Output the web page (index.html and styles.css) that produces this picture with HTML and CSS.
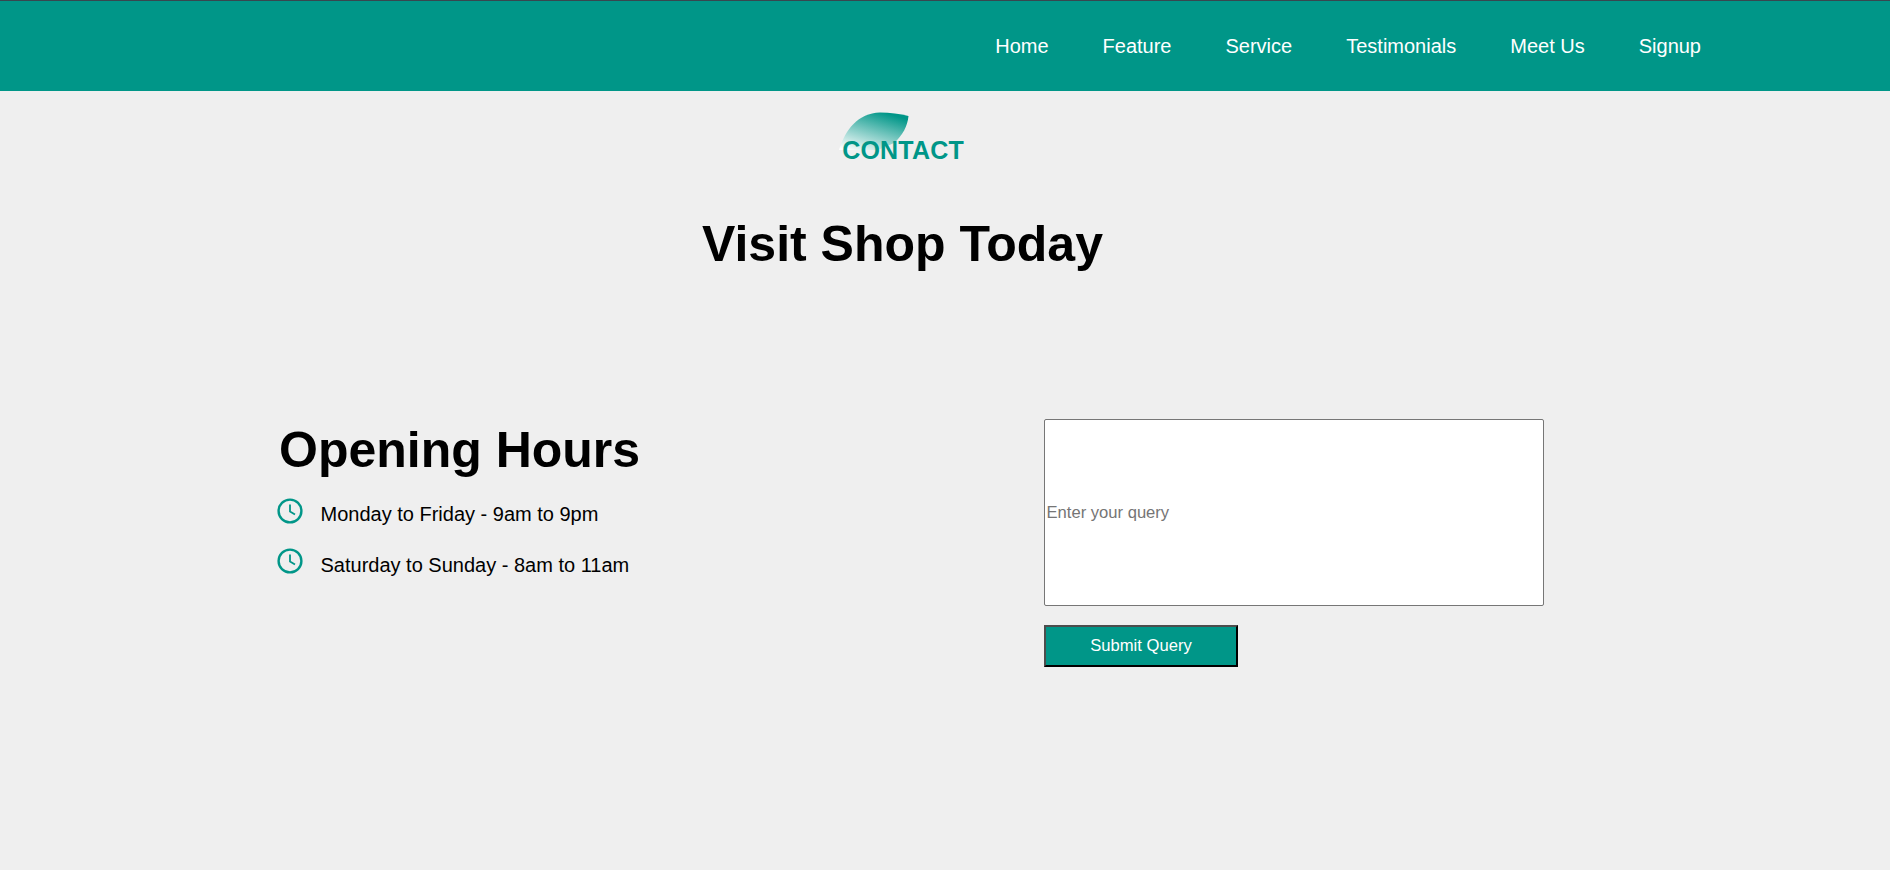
FILE: index.html
```html
<!DOCTYPE html>
<html lang="en">
<head>
<meta charset="utf-8">
<title>Contact</title>
<link rel="stylesheet" href="styles.css">
</head>
<body>
<header class="topbar">
  <nav class="nav">
    <a href="#">Home</a>
    <a href="#">Feature</a>
    <a href="#">Service</a>
    <a href="#">Testimonials</a>
    <a href="#">Meet Us</a>
    <a href="#">Signup</a>
  </nav>
</header>
<section class="title-block">
  <div class="eyebrow">
    <svg class="leaf" width="72" height="40" viewBox="0 0 72 40" aria-hidden="true">
      <defs>
        <linearGradient id="leafgrad" x1="0.66" y1="0" x2="0.1" y2="1">
          <stop offset="0" stop-color="#009688"/>
          <stop offset="1" stop-color="#fff"/>
        </linearGradient>
      </defs>
      <path d="M1 38 C7 18 20 1 42 0.5 C52 0.5 62 2 70.500 4 C69.500 14 65 23 56 31 L40 38 Z" fill="url(#leafgrad)"/>
    </svg>
    <span class="eyebrow-text">CONTACT</span>
  </div>
  <h1>Visit Shop Today</h1>
</section>
<main class="columns">
  <div class="hours">
    <h2>Opening Hours</h2>
    <ul>
      <li>
        <svg class="clock" width="26" height="26" viewBox="0 0 26 26" aria-hidden="true"><circle cx="13" cy="13" r="11.4"/><path class="hand" d="M13 6.5V13.5L18 16.5"/></svg>
        <span>Monday to Friday - 9am to 9pm</span>
      </li>
      <li>
        <svg class="clock" width="26" height="26" viewBox="0 0 26 26" aria-hidden="true"><circle cx="13" cy="13" r="11.4"/><path class="hand" d="M13 6.5V13.5L18 16.5"/></svg>
        <span>Saturday to Sunday - 8am to 11am</span>
      </li>
    </ul>
  </div>
  <form class="query">
    <input class="query-input" type="text" placeholder="Enter your query">
    <button class="submit" type="button">Submit Query</button>
  </form>
</main>
</body>
</html>
```
FILE: styles.css
```css
* { box-sizing: border-box; }
html, body { margin: 0; height: 100%; overflow: hidden; }
body {
  background: #efefef;
  color: #000;
  font-family: "Liberation Sans", Arial, sans-serif;
}
.topbar {
  height: 91px;
  background: #009688;
  border-top: 1px solid #37474f;
  display: flex;
  justify-content: flex-end;
  align-items: center;
  padding-right: 189px;
}
.nav { display: flex; gap: 54px; }
.nav a { color: #fff; font-size: 20px; text-decoration: none; }
.title-block {
  width: 1805px;
  display: flex;
  flex-direction: column;
  align-items: center;
}
.eyebrow { position: relative; margin-top: 21px; padding: 24px 0 0 1px; height: 57px; }
.leaf { position: absolute; left: -3px; top: 0; }
.eyebrow-text {
  position: relative;
  display: block;
  color: #009688;
  font-size: 25px;
  font-weight: 700;
  line-height: 29px;
  letter-spacing: 0.2px;
}
h1 {
  margin: 46px 0 0;
  font-size: 50px;
  line-height: 58px;
}
.columns {
  display: flex;
  margin-top: 146px;
  padding-left: 277px;
}
.hours { width: 767px; padding-top: 2px; }
h2 {
  margin: 0 0 0 2px;
  font-size: 50px;
  line-height: 58px;
}
ul { list-style: none; margin: 20px 0 0; padding: 0; }
li { display: flex; gap: 17.5px; height: 51px; font-size: 20px; }
li span { line-height: 29px; margin-top: 1px; }
.clock { fill: none; stroke: #009688; stroke-width: 2.4; margin-top: -1px; }
li + li .clock { margin-top: -2px; }
.hand { stroke-width: 1.8; }
.query { display: flex; flex-direction: column; align-items: flex-start; gap: 19px; }
.query-input {
  width: 500px;
  height: 187px;
  padding: 0 1.5px;
  background: #fff;
  border: 1px solid #767676;
  border-radius: 2px;
  font-family: inherit;
  font-size: 16.6px;
}
.query-input::placeholder { color: #757575; }
.submit {
  width: 194px;
  height: 42px;
  background: #009688;
  color: #fff;
  font-family: inherit;
  font-size: 16.6px;
  border: 2px solid;
  border-color: #4d4d4d #000 #000 #4d4d4d;
  padding: 0;
}
```
